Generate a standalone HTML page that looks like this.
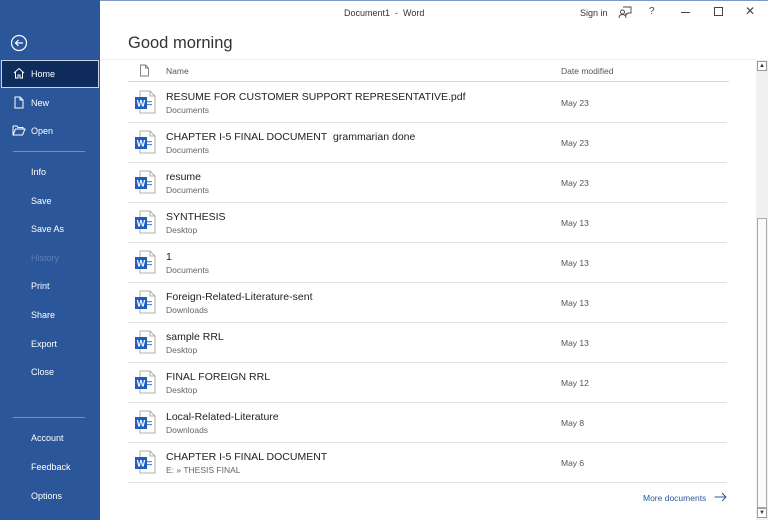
<!DOCTYPE html>
<html><head><meta charset="utf-8"><style>
*{margin:0;padding:0;box-sizing:border-box}
body{width:768px;height:520px;overflow:hidden;background:#fff;font-family:"Liberation Sans",sans-serif;position:relative}
.side{position:absolute;left:0;top:0;width:100px;height:520px;background:#2b579a;color:#fff}
.nav{position:absolute;left:31px;font-size:9px;line-height:12px}
.sep{position:absolute;left:13px;width:72px;height:1px;background:#6f8fc0}
.home{position:absolute;left:1px;top:60px;width:98px;height:28px;background:#0f2c5c;border:1px solid #c8d4e8}
.a{position:absolute}
.t{position:absolute;left:166px;font-size:10.5px;color:#222;white-space:nowrap}
.s{position:absolute;left:166px;font-size:8.5px;color:#666;white-space:nowrap}
.d{position:absolute;left:561px;font-size:8.5px;color:#555}
.line{position:absolute;left:128px;width:599px;height:1px;background:#e1e1e1}
.ic{position:absolute;left:134px;width:22px;height:24px}
</style></head><body>
<div class="side">
<svg class="a" style="left:10px;top:34px" width="18" height="18" viewBox="0 0 18 18"><circle cx="9" cy="9" r="7.5" fill="none" stroke="#fff" stroke-width="1.2"/><path d="M13 9H5.5M8.5 6L5.5 9l3 3" fill="none" stroke="#fff" stroke-width="1.2"/></svg>
<div class="home"></div>
<svg class="a" style="left:13px;top:67px" width="12" height="12" viewBox="0 0 12 12"><path d="M1 6L6 1.5 11 6M2.5 5v6h2.5V8h2v3h2.5V5" fill="none" stroke="#fff" stroke-width="1"/></svg>
<div class="nav" style="top:68px">Home</div>
<svg class="a" style="left:13px;top:96px" width="12" height="13" viewBox="0 0 12 13"><path d="M2 1h5l3 3v8H2z M7 1v3h3" fill="none" stroke="#fff" stroke-width="1"/></svg>
<div class="nav" style="top:97px">New</div>
<svg class="a" style="left:12px;top:125px" width="14" height="11" viewBox="0 0 14 11"><path d="M1 1h4l1 1.5h5V4M1 1v9h9.5L13 4H3.5L1 10" fill="none" stroke="#fff" stroke-width="1"/></svg>
<div class="nav" style="top:125px">Open</div>
<div class="sep" style="top:151px"></div>
<div class="nav" style="top:166px">Info</div>
<div class="nav" style="top:195px">Save</div>
<div class="nav" style="top:223px">Save As</div>
<div class="nav" style="top:252px;color:#5b7db5">History</div>
<div class="nav" style="top:280px">Print</div>
<div class="nav" style="top:309px">Share</div>
<div class="nav" style="top:338px">Export</div>
<div class="nav" style="top:366px">Close</div>
<div class="sep" style="top:417px"></div>
<div class="nav" style="top:432px">Account</div>
<div class="nav" style="top:461px">Feedback</div>
<div class="nav" style="top:490px">Options</div>
</div>
<div class="a" style="left:100px;top:0;width:668px;height:1px;background:#7d9ac4"></div>
<div class="a" style="left:344px;top:8px;font-size:9px;color:#333">Document1&nbsp; - &nbsp;Word</div>
<div class="a" style="left:580px;top:8px;font-size:9px;color:#333">Sign in</div>
<svg class="a" style="left:618px;top:5px" width="14" height="14" viewBox="0 0 14 14"><path d="M5 2h8v6h-3l-2 2V8" fill="none" stroke="#444" stroke-width="0.9"/><circle cx="4.5" cy="7" r="2" fill="none" stroke="#444" stroke-width="0.9"/><path d="M1 13c0-2.5 1.5-3.5 3.5-3.5S8 10.5 8 13" fill="none" stroke="#444" stroke-width="0.9"/></svg>
<div class="a" style="left:649px;top:6px;font-size:10px;color:#444">?</div>
<div class="a" style="left:681px;top:12px;width:9px;height:1px;background:#444"></div>
<div class="a" style="left:714px;top:7px;width:9px;height:9px;border:1px solid #444"></div>
<div class="a" style="left:745px;top:4px;font-size:12px;color:#444">✕</div>
<div class="a" style="left:128px;top:34px;font-size:16.5px;color:#333">Good morning</div>
<div class="a" style="left:100px;top:59px;width:656px;height:1px;background:#eee"></div>
<svg class="a" style="left:139px;top:64px" width="11" height="13" viewBox="0 0 11 13"><path d="M1.5 1h5l3 3v8h-8z M6.5 1v3h3" fill="none" stroke="#777" stroke-width="0.9"/></svg>
<div class="a" style="left:166px;top:66px;font-size:8.5px;color:#555">Name</div>
<div class="d" style="top:66px">Date modified</div>
<div class="line" style="top:81px;width:601px;background:#d8d8d8"></div>

<svg width="0" height="0" style="position:absolute"><defs><symbol id="w" viewBox="0 0 22 24"><path d="M6 1h10l5 5v17H6z" fill="#fff" stroke="#999" stroke-width="0.8"/><path d="M16 1v5h5" fill="none" stroke="#999" stroke-width="0.8"/><rect x="12" y="11" width="6" height="1.2" fill="#5b8fd6"/><rect x="12" y="14" width="6" height="1.2" fill="#5b8fd6"/><rect x="1" y="7" width="12" height="12" fill="#1f5fbf"/><text x="7" y="16.5" font-family="Liberation Sans" font-size="9" font-weight="bold" fill="#fff" text-anchor="middle">W</text></symbol></defs></svg>

<svg class="ic" style="top:90px"><use href="#w"/></svg><div class="t" style="top:91px">RESUME FOR CUSTOMER SUPPORT REPRESENTATIVE.pdf</div><div class="s" style="top:105px">Documents</div><div class="d" style="top:98px">May 23</div><div class="line" style="top:122px"></div>
<svg class="ic" style="top:130px"><use href="#w"/></svg><div class="t" style="top:131px">CHAPTER I-5 FINAL DOCUMENT&nbsp; grammarian done</div><div class="s" style="top:145px">Documents</div><div class="d" style="top:138px">May 23</div><div class="line" style="top:162px"></div>
<svg class="ic" style="top:170px"><use href="#w"/></svg><div class="t" style="top:171px">resume</div><div class="s" style="top:185px">Documents</div><div class="d" style="top:178px">May 23</div><div class="line" style="top:202px"></div>
<svg class="ic" style="top:210px"><use href="#w"/></svg><div class="t" style="top:211px">SYNTHESIS</div><div class="s" style="top:225px">Desktop</div><div class="d" style="top:218px">May 13</div><div class="line" style="top:242px"></div>
<svg class="ic" style="top:250px"><use href="#w"/></svg><div class="t" style="top:251px">1</div><div class="s" style="top:265px">Documents</div><div class="d" style="top:258px">May 13</div><div class="line" style="top:282px"></div>
<svg class="ic" style="top:290px"><use href="#w"/></svg><div class="t" style="top:291px">Foreign-Related-Literature-sent</div><div class="s" style="top:305px">Downloads</div><div class="d" style="top:298px">May 13</div><div class="line" style="top:322px"></div>
<svg class="ic" style="top:330px"><use href="#w"/></svg><div class="t" style="top:331px">sample RRL</div><div class="s" style="top:345px">Desktop</div><div class="d" style="top:338px">May 13</div><div class="line" style="top:362px"></div>
<svg class="ic" style="top:370px"><use href="#w"/></svg><div class="t" style="top:371px">FINAL FOREIGN RRL</div><div class="s" style="top:385px">Desktop</div><div class="d" style="top:378px">May 12</div><div class="line" style="top:402px"></div>
<svg class="ic" style="top:410px"><use href="#w"/></svg><div class="t" style="top:411px">Local-Related-Literature</div><div class="s" style="top:425px">Downloads</div><div class="d" style="top:418px">May 8</div><div class="line" style="top:442px"></div>
<svg class="ic" style="top:450px"><use href="#w"/></svg><div class="t" style="top:451px">CHAPTER I-5 FINAL DOCUMENT</div><div class="s" style="top:465px">E: » THESIS FINAL</div><div class="d" style="top:458px">May 6</div><div class="line" style="top:482px"></div>

<div class="a" style="left:643px;top:493px;font-size:8.5px;color:#2b579a">More documents</div>
<svg class="a" style="left:714px;top:492px" width="13" height="10" viewBox="0 0 13 10"><path d="M0.5 5H12M8 1l4 4-4 4" fill="none" stroke="#2b579a" stroke-width="1"/></svg>

<div class="a" style="left:756px;top:60px;width:12px;height:460px;background:#f0f0f0"></div>
<div class="a" style="left:757px;top:61px;width:10px;height:10px;border:1px solid #999;background:#fff;font-size:6px;text-align:center;line-height:8px;color:#333">▲</div>
<div class="a" style="left:757px;top:218px;width:10px;height:290px;border:1px solid #aaa;background:#fafafa"></div>
<div class="a" style="left:757px;top:508px;width:10px;height:10px;border:1px solid #999;background:#fff;font-size:6px;text-align:center;line-height:8px;color:#333">▼</div>
</body></html>
